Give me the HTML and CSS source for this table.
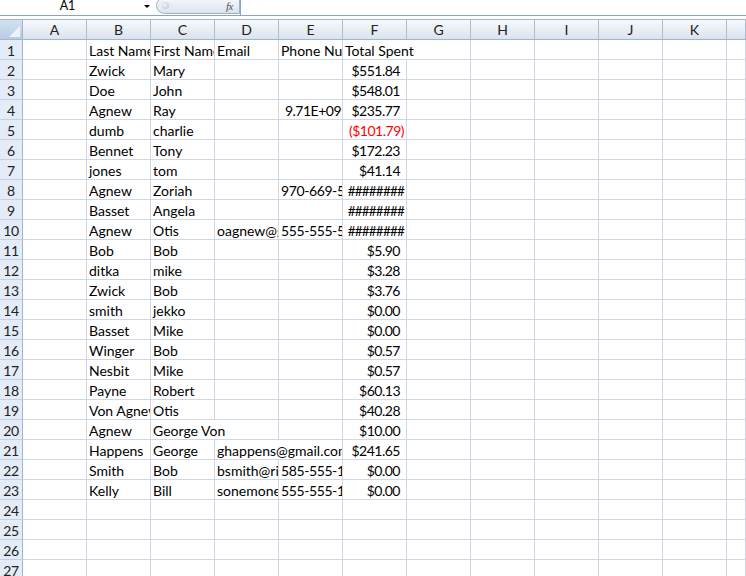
FILE: index.html
```html
<!DOCTYPE html>
<html>
<head>
<meta charset="utf-8">
<link rel="stylesheet" href="styles.css">
</head>
<body>
<div class="fbar">
  <div class="namebox">A1</div>
  <div class="nb-arrow"></div>
  <div class="pill"><span class="dot"></span><span class="fx">fx</span></div>
  <div class="finput"></div>
</div>
<div class="gap"></div>
<div class="sheet">
  <div class="hdr">
    <div class="corner"></div>
    <div class="ch">A</div><div class="ch">B</div><div class="ch">C</div><div class="ch">D</div><div class="ch">E</div><div class="ch">F</div><div class="ch">G</div><div class="ch">H</div><div class="ch">I</div><div class="ch">J</div><div class="ch">K</div><div class="ch"></div>
  </div>
  <div class="row"><div class="rh">1</div><div class="c"></div><div class="c">Last Name</div><div class="c">First Name</div><div class="c">Email</div><div class="c">Phone Number</div><div class="c s2">Total Spent</div><div class="c"></div><div class="c"></div><div class="c"></div><div class="c"></div><div class="c"></div></div>
  <div class="row"><div class="rh">2</div><div class="c"></div><div class="c">Zwick</div><div class="c">Mary</div><div class="c"></div><div class="c"></div><div class="c n">$551.84</div><div class="c"></div><div class="c"></div><div class="c"></div><div class="c"></div><div class="c"></div><div class="c"></div></div>
  <div class="row"><div class="rh">3</div><div class="c"></div><div class="c">Doe</div><div class="c">John</div><div class="c"></div><div class="c"></div><div class="c n">$548.01</div><div class="c"></div><div class="c"></div><div class="c"></div><div class="c"></div><div class="c"></div><div class="c"></div></div>
  <div class="row"><div class="rh">4</div><div class="c"></div><div class="c">Agnew</div><div class="c">Ray</div><div class="c"></div><div class="c g">9.71E+09</div><div class="c n">$235.77</div><div class="c"></div><div class="c"></div><div class="c"></div><div class="c"></div><div class="c"></div><div class="c"></div></div>
  <div class="row"><div class="rh">5</div><div class="c"></div><div class="c">dumb</div><div class="c">charlie</div><div class="c"></div><div class="c"></div><div class="c neg">($101.79)</div><div class="c"></div><div class="c"></div><div class="c"></div><div class="c"></div><div class="c"></div><div class="c"></div></div>
  <div class="row"><div class="rh">6</div><div class="c"></div><div class="c">Bennet</div><div class="c">Tony</div><div class="c"></div><div class="c"></div><div class="c n">$172.23</div><div class="c"></div><div class="c"></div><div class="c"></div><div class="c"></div><div class="c"></div><div class="c"></div></div>
  <div class="row"><div class="rh">7</div><div class="c"></div><div class="c">jones</div><div class="c">tom</div><div class="c"></div><div class="c"></div><div class="c n">$41.14</div><div class="c"></div><div class="c"></div><div class="c"></div><div class="c"></div><div class="c"></div><div class="c"></div></div>
  <div class="row"><div class="rh">8</div><div class="c"></div><div class="c">Agnew</div><div class="c">Zoriah</div><div class="c"></div><div class="c num">970-669-5055</div><div class="c h">########</div><div class="c"></div><div class="c"></div><div class="c"></div><div class="c"></div><div class="c"></div><div class="c"></div></div>
  <div class="row"><div class="rh">9</div><div class="c"></div><div class="c">Basset</div><div class="c">Angela</div><div class="c"></div><div class="c"></div><div class="c h">########</div><div class="c"></div><div class="c"></div><div class="c"></div><div class="c"></div><div class="c"></div><div class="c"></div></div>
  <div class="row"><div class="rh">10</div><div class="c"></div><div class="c">Agnew</div><div class="c">Otis</div><div class="c">oagnew@gmail.com</div><div class="c num">555-555-5555</div><div class="c h">########</div><div class="c"></div><div class="c"></div><div class="c"></div><div class="c"></div><div class="c"></div><div class="c"></div></div>
  <div class="row"><div class="rh">11</div><div class="c"></div><div class="c">Bob</div><div class="c">Bob</div><div class="c"></div><div class="c"></div><div class="c n">$5.90</div><div class="c"></div><div class="c"></div><div class="c"></div><div class="c"></div><div class="c"></div><div class="c"></div></div>
  <div class="row"><div class="rh">12</div><div class="c"></div><div class="c">ditka</div><div class="c">mike</div><div class="c"></div><div class="c"></div><div class="c n">$3.28</div><div class="c"></div><div class="c"></div><div class="c"></div><div class="c"></div><div class="c"></div><div class="c"></div></div>
  <div class="row"><div class="rh">13</div><div class="c"></div><div class="c">Zwick</div><div class="c">Bob</div><div class="c"></div><div class="c"></div><div class="c n">$3.76</div><div class="c"></div><div class="c"></div><div class="c"></div><div class="c"></div><div class="c"></div><div class="c"></div></div>
  <div class="row"><div class="rh">14</div><div class="c"></div><div class="c">smith</div><div class="c">jekko</div><div class="c"></div><div class="c"></div><div class="c n">$0.00</div><div class="c"></div><div class="c"></div><div class="c"></div><div class="c"></div><div class="c"></div><div class="c"></div></div>
  <div class="row"><div class="rh">15</div><div class="c"></div><div class="c">Basset</div><div class="c">Mike</div><div class="c"></div><div class="c"></div><div class="c n">$0.00</div><div class="c"></div><div class="c"></div><div class="c"></div><div class="c"></div><div class="c"></div><div class="c"></div></div>
  <div class="row"><div class="rh">16</div><div class="c"></div><div class="c">Winger</div><div class="c">Bob</div><div class="c"></div><div class="c"></div><div class="c n">$0.57</div><div class="c"></div><div class="c"></div><div class="c"></div><div class="c"></div><div class="c"></div><div class="c"></div></div>
  <div class="row"><div class="rh">17</div><div class="c"></div><div class="c">Nesbit</div><div class="c">Mike</div><div class="c"></div><div class="c"></div><div class="c n">$0.57</div><div class="c"></div><div class="c"></div><div class="c"></div><div class="c"></div><div class="c"></div><div class="c"></div></div>
  <div class="row"><div class="rh">18</div><div class="c"></div><div class="c">Payne</div><div class="c">Robert</div><div class="c"></div><div class="c"></div><div class="c n">$60.13</div><div class="c"></div><div class="c"></div><div class="c"></div><div class="c"></div><div class="c"></div><div class="c"></div></div>
  <div class="row"><div class="rh">19</div><div class="c"></div><div class="c">Von Agnew</div><div class="c">Otis</div><div class="c"></div><div class="c"></div><div class="c n">$40.28</div><div class="c"></div><div class="c"></div><div class="c"></div><div class="c"></div><div class="c"></div><div class="c"></div></div>
  <div class="row"><div class="rh">20</div><div class="c"></div><div class="c">Agnew</div><div class="c s2">George Von</div><div class="c"></div><div class="c n">$10.00</div><div class="c"></div><div class="c"></div><div class="c"></div><div class="c"></div><div class="c"></div><div class="c"></div></div>
  <div class="row"><div class="rh">21</div><div class="c"></div><div class="c">Happens</div><div class="c">George</div><div class="c s2">ghappens@gmail.com</div><div class="c n">$241.65</div><div class="c"></div><div class="c"></div><div class="c"></div><div class="c"></div><div class="c"></div><div class="c"></div></div>
  <div class="row"><div class="rh">22</div><div class="c"></div><div class="c">Smith</div><div class="c">Bob</div><div class="c">bsmith@rit.edu</div><div class="c num">585-555-1122</div><div class="c n">$0.00</div><div class="c"></div><div class="c"></div><div class="c"></div><div class="c"></div><div class="c"></div><div class="c"></div></div>
  <div class="row"><div class="rh">23</div><div class="c"></div><div class="c">Kelly</div><div class="c">Bill</div><div class="c">sonemone@aol.com</div><div class="c num">555-555-1515</div><div class="c n">$0.00</div><div class="c"></div><div class="c"></div><div class="c"></div><div class="c"></div><div class="c"></div><div class="c"></div></div>
  <div class="row"><div class="rh">24</div><div class="c"></div><div class="c"></div><div class="c"></div><div class="c"></div><div class="c"></div><div class="c"></div><div class="c"></div><div class="c"></div><div class="c"></div><div class="c"></div><div class="c"></div><div class="c"></div></div>
  <div class="row"><div class="rh">25</div><div class="c"></div><div class="c"></div><div class="c"></div><div class="c"></div><div class="c"></div><div class="c"></div><div class="c"></div><div class="c"></div><div class="c"></div><div class="c"></div><div class="c"></div><div class="c"></div></div>
  <div class="row"><div class="rh">26</div><div class="c"></div><div class="c"></div><div class="c"></div><div class="c"></div><div class="c"></div><div class="c"></div><div class="c"></div><div class="c"></div><div class="c"></div><div class="c"></div><div class="c"></div><div class="c"></div></div>
  <div class="row"><div class="rh">27</div><div class="c"></div><div class="c"></div><div class="c"></div><div class="c"></div><div class="c"></div><div class="c"></div><div class="c"></div><div class="c"></div><div class="c"></div><div class="c"></div><div class="c"></div><div class="c"></div></div>
</div>
</body>
</html>
```
FILE: styles.css
```css
* { box-sizing: border-box; }
html, body {
  margin: 0;
  padding: 0;
  width: 746px;
  height: 576px;
  overflow: hidden;
  background: #fff;
}
body {
  font-family: Lato, "Liberation Sans", sans-serif;
  font-size: 14px;
  color: #000;
}

/* formula bar */
.fbar {
  display: flex;
  height: 16px;
  border-bottom: 1px solid #8ea3bf;
}
.namebox {
  width: 135px;
  text-align: center;
  font-size: 12.5px;
  line-height: 12px;
  color: #000;
}
.nb-arrow {
  width: 0;
  height: 0;
  margin: 5px 0 0 9px;
  border-left: 3px solid transparent;
  border-right: 3px solid transparent;
  border-top: 3px solid #000;
}
.pill {
  width: 84px;
  height: 17px;
  margin: -3px 0 0 6px;
  border: 1px solid #9fb0c6;
  border-radius: 9px 0 0 9px;
  background: linear-gradient(#f6f8fb, #dbe3ee);
  display: flex;
  align-items: center;
  justify-content: space-between;
  padding: 0 6px 0 5px;
}
.dot {
  width: 7px;
  height: 7px;
  border-radius: 50%;
  background: radial-gradient(circle at 40% 40%, #f3f5f8, #b5bfcb);
}
.fx {
  font-family: "Liberation Serif", serif;
  font-style: italic;
  font-size: 11px;
  color: #555;
  letter-spacing: -0.5px;
  margin-top: 1px;
}
.finput {
  flex: 1;
  border-left: 1px solid #8ea3bf;
}
.gap { height: 3px; }

/* sheet */
.hdr, .row {
  display: grid;
  grid-template-columns: 23px repeat(11, 64px) 1fr;
}
.hdr { height: 21px; }
.row { height: 20px; }

.corner {
  background: linear-gradient(#d3e0f0, #b9cce4);
  border-top: 1px solid #9eb6ce;
  border-bottom: 1px solid #9eb6ce;
  border-right: 1px solid #9eb6ce;
  display: flex;
  justify-content: flex-end;
  align-items: flex-end;
  padding: 0 2px 2px 0;
}
.corner::after {
  content: "";
  width: 0;
  height: 0;
  border-left: 11px solid transparent;
  border-bottom: 11px solid #eef3fa;
}
.ch {
  background: linear-gradient(#f7f9fc, #dbe3ee);
  border-top: 1px solid #9eb6ce;
  border-bottom: 1px solid #9eb6ce;
  border-right: 1px solid #a9bed4;
  text-align: center;
  line-height: 19px;
  color: #222;
}
.rh {
  background: #e4ecf7;
  border-right: 1px solid #9eb6ce;
  border-bottom: 1px solid #c3d1e3;
  text-align: center;
  padding-top: 3px;
  line-height: 16px;
  color: #222;
  letter-spacing: -0.3px;
}
.c {
  border-right: 1px solid #d0d7e5;
  border-bottom: 1px solid #d0d7e5;
  white-space: nowrap;
  overflow: hidden;
  padding: 3px 0 0 2px;
  line-height: 16px;
}
.s2 { grid-column: span 2; }
.num { letter-spacing: -0.4px; }
.n { text-align: right; padding-right: 6px; letter-spacing: -0.5px; }
.g { text-align: right; padding-right: 1px; letter-spacing: -0.5px; }
.neg { text-align: right; padding-right: 2px; color: #ff0000; letter-spacing: -0.5px; }
.h {
  text-align: right;
  padding-right: 2px;
  letter-spacing: -0.8px;
  font-size: 13.5px;
}
```
